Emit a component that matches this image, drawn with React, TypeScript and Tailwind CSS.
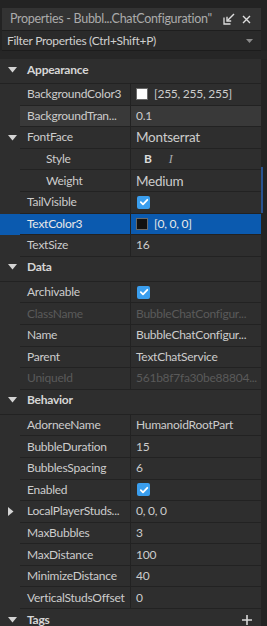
import React from "react";

type RowProps = {
  name: string;
  value?: React.ReactNode;
  indent?: boolean;
  disabled?: boolean;
  selected?: boolean;
  hover?: boolean;
  arrow?: "down" | "right";
};

function DownArrow() {
  return (
    <svg width="9" height="6" viewBox="0 0 9 6">
      <path d="M0 0 H9 L4.5 5.5 Z" fill="#d4d4d4" />
    </svg>
  );
}

function RightArrow() {
  return (
    <svg width="6" height="9" viewBox="0 0 6 9">
      <path d="M0 0 V9 L5.5 4.5 Z" fill="#d4d4d4" />
    </svg>
  );
}

function Check() {
  return (
    <div className="w-[13px] h-[13px] rounded-[2px] bg-[#3a9eee] flex items-center justify-center">
      <svg width="10" height="10" viewBox="0 0 10 10">
        <path d="M1.8 5.2 L4 7.3 L8.3 2.8" stroke="#ffffff" strokeWidth="1.8" fill="none" strokeLinecap="round" strokeLinejoin="round" />
      </svg>
    </div>
  );
}

function Swatch({ color, text }: { color: string; text: string }) {
  return (
    <div className="flex items-center">
      <div className="w-[12px] h-[12px] border border-[#6a6a6a]" style={{ backgroundColor: color }} />
      <span className="ml-[6px]">{text}</span>
    </div>
  );
}

function Row({ name, value, indent, disabled, selected, hover, arrow }: RowProps) {
  const bg = selected ? "bg-[#0b5aaf]" : "";
  const cellBg = selected ? "bg-[#0b5aaf]" : hover ? "bg-[#393939]" : "";
  const txt = disabled ? "text-[#5a5a5a]" : selected ? "text-[#e8e8e8]" : "text-[#cccccc]";
  return (
    <div className={`flex h-[21.6px] shrink-0 ${bg}`}>
      <div className="w-[20px] shrink-0 flex items-center pl-[8px]">
        {arrow === "down" && <DownArrow />}
        {arrow === "right" && <RightArrow />}
      </div>
      <div
        className={`w-[111px] shrink-0 flex items-center border-b border-r border-[#222222] ${cellBg} ${txt} ${
          indent ? "pl-[26px]" : "pl-[7px]"
        } whitespace-nowrap overflow-hidden`}
      >
        {name}
      </div>
      <div className={`flex-1 flex items-center border-b border-[#222222] pl-[5px] ${cellBg} ${txt} whitespace-nowrap overflow-hidden`}>
        {value}
      </div>
    </div>
  );
}

function Header({ label, plus }: { label: string; plus?: boolean }) {
  return (
    <div className="flex h-[25px] shrink-0 items-center border-b border-[#222222] pb-[3px]">
      <div className="w-[20px] shrink-0 flex items-center pl-[8px]">
        <DownArrow />
      </div>
      <div className="pl-[7px] font-bold text-[#d6d6d6] flex-1">{label}</div>
      {plus && (
        <svg width="10" height="10" viewBox="0 0 10 10" className="mr-[9px]">
          <path d="M5 0 V10 M0 5 H10" stroke="#d8d8d8" strokeWidth="1.6" />
        </svg>
      )}
    </div>
  );
}

export default function App() {
  return (
    <div className="w-[267px] h-[626px] overflow-hidden bg-[#232323] flex flex-col font-['Lato',sans-serif] text-[12px] tracking-[-0.25px] select-none">
      <div className="h-[8px] shrink-0" />
      <div className="flex shrink-0">
        <div className="ml-[2px] w-[259px] h-[23px] bg-[#333333] flex items-center pl-[8px] border-b border-[#1e1e1e]">
          <span className="text-[#ababab] text-[12.5px] tracking-[-0.3px] whitespace-nowrap flex-1 overflow-hidden">
            Properties - Bubbl...ChatConfiguration"
          </span>
          <svg width="12" height="12" viewBox="0 0 12 12" className="mr-[7px]">
            <path d="M1 4.5 V11 H7.5" stroke="#dedede" strokeWidth="1.3" fill="none" />
            <path d="M11 1 L4.5 7.5" stroke="#dedede" strokeWidth="1.4" />
            <path d="M4 3.8 V8 H8.2" stroke="#dedede" strokeWidth="1.4" fill="none" />
          </svg>
          <svg width="9" height="9" viewBox="0 0 9 9" className="mr-[10px]">
            <path d="M1 1 L8 8 M8 1 L1 8" stroke="#dedede" strokeWidth="1.4" />
          </svg>
        </div>
      </div>
      <div className="flex shrink-0">
        <div className="ml-[2px] w-[259px] h-[20px] bg-[#2a2a2a] border-b border-[#1c1c1c] flex items-center pl-[5px]">
          <span className="text-[#cfcfcf] text-[12px] tracking-[-0.3px] flex-1 whitespace-nowrap">Filter Properties (Ctrl+Shift+P)</span>
          <svg width="7" height="4" viewBox="0 0 7 4" className="mr-[8px]">
            <path d="M0 0 H7 L3.5 4 Z" fill="#8a8a8a" />
          </svg>
        </div>
      </div>
      <div className="h-[8px] shrink-0 bg-[#262626]" />
      <div className="flex flex-1 min-h-0">
        <div className="w-[261px] shrink-0 bg-[#2e2e2e] flex flex-col overflow-hidden">
          <Header label="Appearance" />
          <Row name="BackgroundColor3" value={<Swatch color="#ffffff" text="[255, 255, 255]" />} />
          <Row name="BackgroundTran..." value="0.1" hover />
          <Row name="FontFace" value={<span className="text-[13.5px]">Montserrat</span>} arrow="down" />
          <Row
            name="Style"
            indent
            value={
              <div className="flex items-center pl-[8px]">
                <span className="font-bold text-[#dcdcdc]">B</span>
                <span className="italic ml-[17px] font-['Liberation_Serif',serif] text-[#aaaaaa]">I</span>
              </div>
            }
          />
          <Row name="Weight" indent value={<span className="text-[13.5px]">Medium</span>} />
          <Row name="TailVisible" value={<div className="pl-[1px]"><Check /></div>} />
          <Row name="TextColor3" value={<Swatch color="#111111" text="[0, 0, 0]" />} selected />
          <Row name="TextSize" value="16" />
          <Header label="Data" />
          <Row name="Archivable" value={<div className="pl-[1px]"><Check /></div>} />
          <Row name="ClassName" value="BubbleChatConfigur..." disabled />
          <Row name="Name" value="BubbleChatConfigur..." />
          <Row name="Parent" value="TextChatService" />
          <Row name="UniqueId" value="561b8f7fa30be88804..." disabled />
          <Header label="Behavior" />
          <Row name="AdorneeName" value="HumanoidRootPart" />
          <Row name="BubbleDuration" value="15" />
          <Row name="BubblesSpacing" value="6" />
          <Row name="Enabled" value={<div className="pl-[1px]"><Check /></div>} />
          <Row name="LocalPlayerStuds..." value="0, 0, 0" arrow="right" />
          <Row name="MaxBubbles" value="3" />
          <Row name="MaxDistance" value="100" />
          <Row name="MinimizeDistance" value="40" />
          <Row name="VerticalStudsOffset" value="0" />
          <Header label="Tags" plus />
        </div>
        <div className="flex-1 bg-[#232323] flex flex-col">
          <div className="h-[108px] shrink-0" />
          <div className="w-[2px] h-[46px] bg-[#2a5290]" />
        </div>
      </div>
    </div>
  );
}
